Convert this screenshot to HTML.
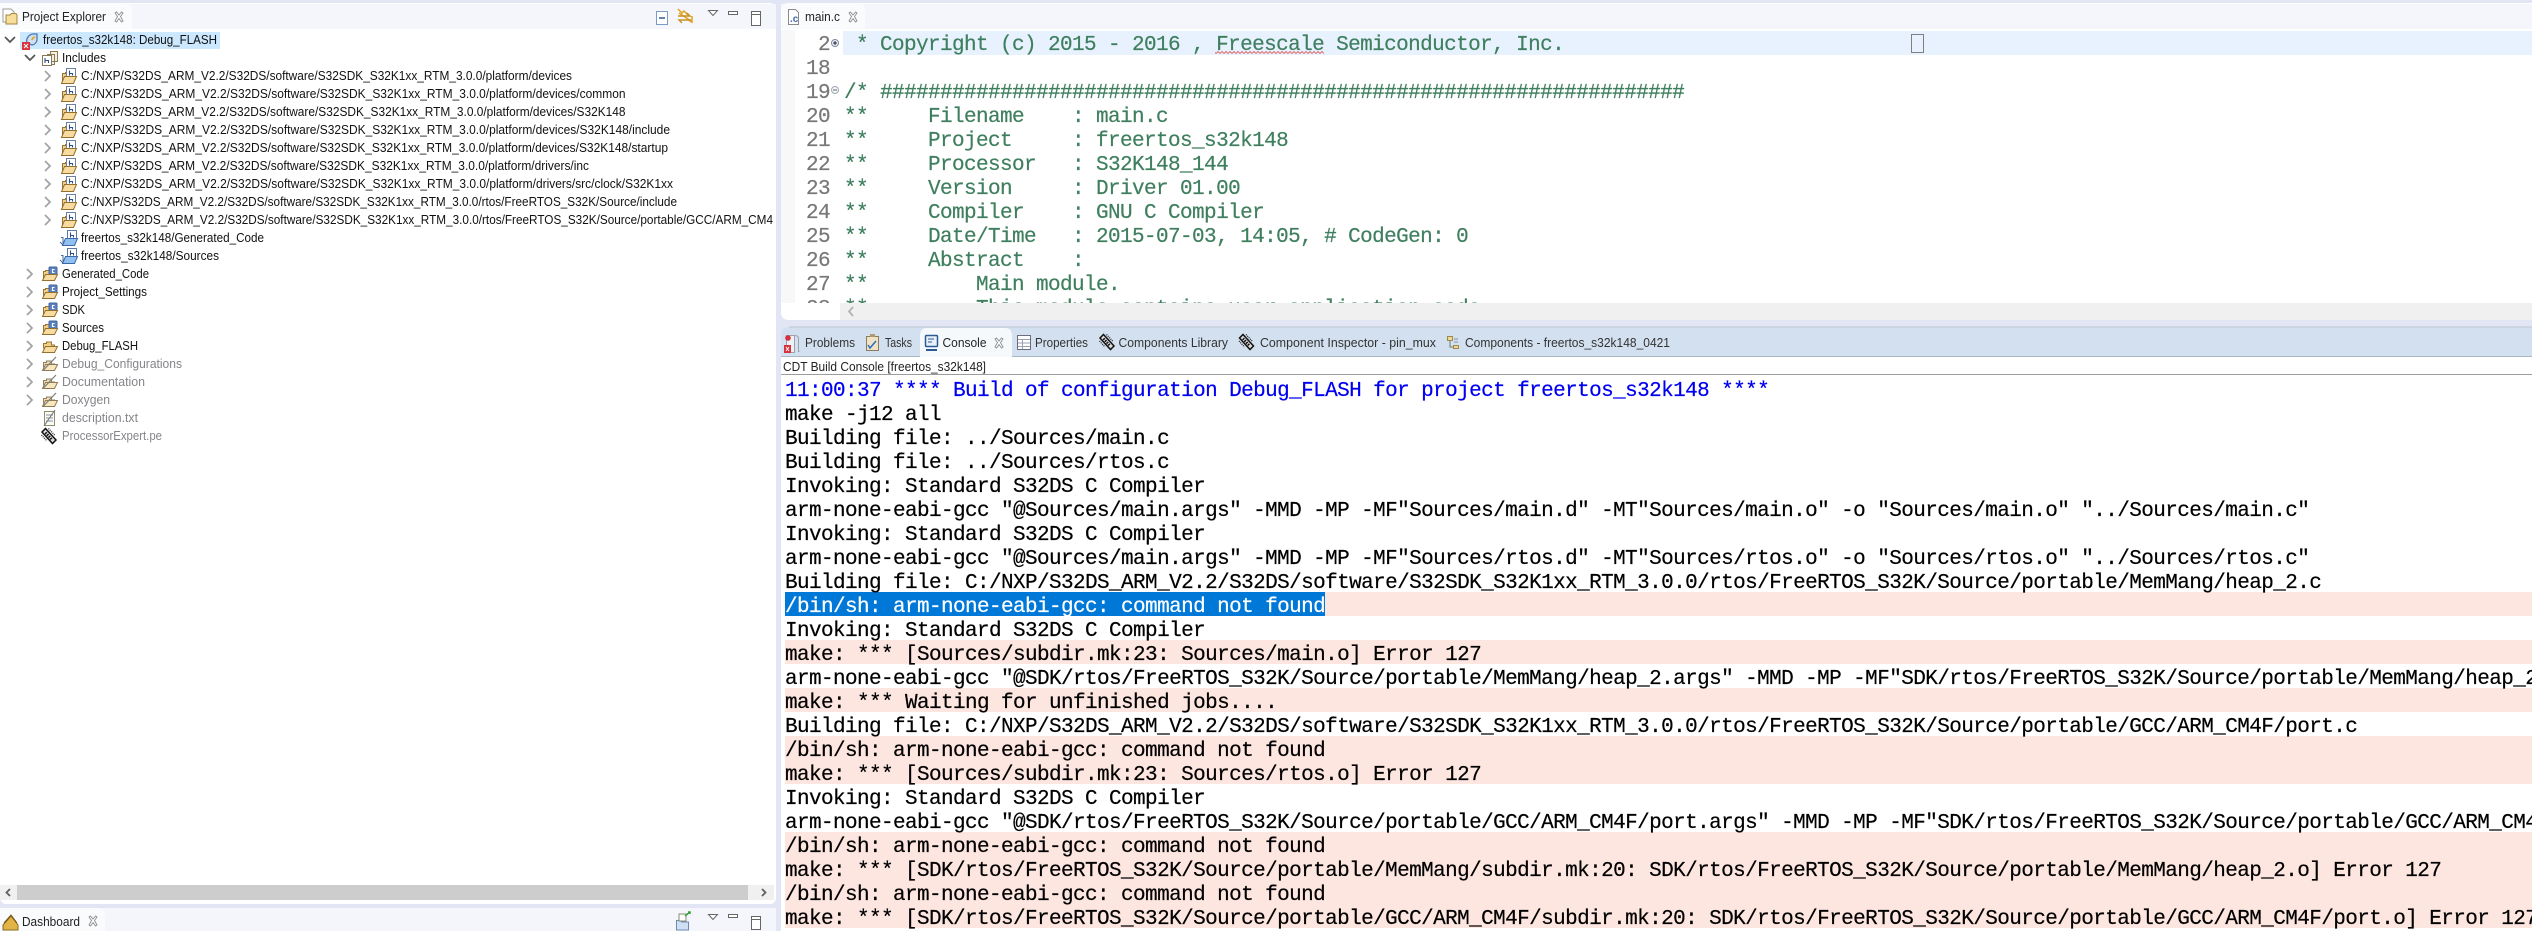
<!DOCTYPE html>
<html><head><meta charset="utf-8"><title>S32DS</title>
<style>
html,body{margin:0;padding:0;background:#e1e5f4;width:2532px;height:931px;overflow:hidden}
svg{display:block}
text{white-space:pre}
.s{font:12.5px "Liberation Sans",sans-serif;fill:#111}
.g{fill:#85858a}
.m{font:21px "Liberation Mono",monospace;letter-spacing:-.6px;fill:#000;stroke:#000;stroke-width:.2}
.c{fill:#3f7f5f;stroke:#3f7f5f}
.n{fill:#787878;stroke:#787878}
.b{fill:#0000f0;stroke:#0000f0}
.w{fill:#fff;stroke:#fff}
</style></head><body>
<svg width="2532" height="931" viewBox="0 0 2532 931" xmlns="http://www.w3.org/2000/svg">
<defs>
<path id="cr" d="M-3-5l5 5-5 5" fill="none" stroke="#a2a2a2" stroke-width="1.7"/>
<path id="cd" d="M-5-3l5 5 5-5" fill="none" stroke="#555" stroke-width="1.7"/>
<g id="x"><path d="M-4-4l1.5-1L0-2l2.5-3L4-4 1.5-.5 4 4 2.5 5 0 1.500-2.500 5-4 4-1.500-.5z" fill="#fff" stroke="#8c8c8c" stroke-width=".9"/></g>
<g id="inc">
<path d="M1.500 5.500h3v-1h2v9h-5z" fill="#f2cf85" stroke="#97753a"/>
<rect x="5.500" y=".5" width="9" height="10" fill="#fff" stroke="#6d7f9b"/>
<path d="M8.500 2.500v5M8.500 5.500h3v2" stroke="#2f4f86" stroke-width="1.100" fill="none"/>
<path d="M.5 15.500l3-7h12l-3 7z" fill="#f8dc9f" stroke="#93702f"/>
</g>
<g id="incb">
<rect x="5.500" y=".5" width="9" height="10" fill="#fff" stroke="#5878a8"/>
<path d="M8.500 2.500v5M8.500 5.500h3v2" stroke="#2f4f86" stroke-width="1.100" fill="none"/>
<path d="M.5 15.500l3-7h12l-3 7z" fill="#8fc0f0" stroke="#3a68a8"/>
<path d="M-1 7.500h2v6M-2 12l3 3" fill="none" stroke="#4a6a98"/>
</g>
<g id="fc">
<path d="M1.500 5.500h2v-1h4v9h-6z" fill="#f2cf85" stroke="#97753a"/>
<rect x="7" y="1" width="8" height="8" rx="1" fill="#5a80c0" stroke="#46659e"/>
<path d="M12.500 3.500h-2v3h2" fill="none" stroke="#fff" stroke-width="1.100"/>
<path d="M.5 14.500l3-6h12l-3 6z" fill="#f8dc9f" stroke="#93702f"/>
</g>
<g id="fo">
<path d="M1.500 5.500h3v-1.500h5v3h3v3h-11z" fill="#f2cf85" stroke="#97753a"/>
<path d="M.5 14.500l3-6h12l-3 6z" fill="#f8dc9f" stroke="#93702f"/>
</g>
<g id="fe">
<path d="M1.500 6.500h3v-1.500h5v3h3v3h-11z" fill="#f2dcae" stroke="#8e8268"/>
<path d="M.5 14.500l3-6h12l-3 6z" fill="#f8e6bd" stroke="#8e7a55"/>
<path d="M1 14.500L14 1" stroke="#7c7c7c" stroke-width="1.200"/>
</g>
<g id="chip">
<path d="M4.500 .5l10.500 11.500-3.500 3.500L1 4z" fill="#dcdcdc" stroke="#111" stroke-width="1.500"/>
<path d="M4.500 4.500l6.500 7.200" stroke="#111" stroke-width="2.400" stroke-dasharray="1.500 1"/>
<path d="M.5 7l5.500 6M7.500 .5l6.500 7" stroke="#222" stroke-width="1.300" stroke-dasharray="1 1"/>
</g>
<pattern id="sq" width="4" height="3" patternUnits="userSpaceOnUse"><path d="M0 2.500l2-2 2 2" fill="none" stroke="#e06060" stroke-width=".9"/></pattern>
<clipPath id="ed"><rect x="781" y="31" width="1751" height="272"/></clipPath>
<clipPath id="lf"><rect x="0" y="30" width="775" height="300"/></clipPath>
</defs>

<rect width="2532" height="931" fill="#e1e5f4"/>

<!-- LEFT PANEL -->
<rect x="0" y="3" width="776" height="901" rx="6" fill="#fff"/>
<path d="M0 4h776v25H0z" fill="#f4f6fb"/>
<path d="M0 3h124q8 0 8 8v18H0z" fill="#fafbfd"/>
<path d="M3 9h8l3 3v10H3z" fill="#fff" stroke="#9c9c9c"/>
<path d="M6 15h4l1.500-1.500H15q2 0 2 2V24H6z" fill="#f7dc9a" stroke="#a5843d"/>
<text class="s" x="22" y="21" textLength="84" lengthAdjust="spacingAndGlyphs" style="fill:#222">Project Explorer</text>
<use href="#x" x="119" y="17"/>
<rect x="656.500" y="11.500" width="11" height="13" fill="#fff" stroke="#7a9cc4"/><path d="M659 18h6" stroke="#2c5c94" stroke-width="1.500"/>
<path d="M678 9l4 4 2-2 5 5M692 16v6l-5-3M679 13l9 6 3 3" fill="none" stroke="#e0a020" stroke-width="1.500"/>
<path d="M678 16h12l-3-3M691 20h-12l3 3" fill="none" stroke="#c8921e" stroke-width="1.400"/>
<path d="M708.500 10.500h9l-4.500 5z" fill="#fff" stroke="#666"/>
<rect x="728.500" y="11.500" width="9" height="3" fill="#fff" stroke="#666"/>
<rect x="751.500" y="11.500" width="9" height="14" fill="#fff" stroke="#666"/><path d="M751 14.500h10" stroke="#666"/>

<rect x="20" y="32" width="200" height="17" fill="#cce8ff"/>
<g clip-path="url(#lf)">
<use href="#cd" x="10" y="40"/>
<path d="M27 43a7 7 0 0 1 7-9l3 0v6a6 6 0 0 1-5 5z" fill="#cfe0f4" stroke="#4f78b0" stroke-width="1.300"/><path d="M32 40a4 4 0 0 1 3-3" stroke="#e0a92e" stroke-width="1.800" fill="none"/>
<rect x="22" y="42" width="8" height="8" fill="#d8343c"/><path d="M24 44l4 4m0-4l-4 4" stroke="#fff"/>
<text class="s" x="43" y="44" textLength="174" lengthAdjust="spacingAndGlyphs">freertos_s32k148: Debug_FLASH</text>

<use href="#cd" x="30" y="58"/>
<path d="M47.500 54.500h7v10h-7zM50.500 51.500h7v10h-7z" fill="#f3f1e6" stroke="#8a7a50"/>
<rect x="42.500" y="55.500" width="9" height="10" fill="#fff" stroke="#86795a"/><path d="M45 58v5M45 60.500h3.500v2.500" stroke="#2f4f86" fill="none" stroke-width="1.100"/>
<text class="s" x="62" y="62" textLength="44" lengthAdjust="spacingAndGlyphs">Includes</text>

<use href="#cr" x="48" y="76"/><use href="#inc" x="61" y="68"/>
<text class="s" x="81" y="80" textLength="491" lengthAdjust="spacingAndGlyphs">C:/NXP/S32DS_ARM_V2.2/S32DS/software/S32SDK_S32K1xx_RTM_3.0.0/platform/devices</text>
<use href="#cr" x="48" y="94"/><use href="#inc" x="61" y="86"/>
<text class="s" x="81" y="98" textLength="544.500" lengthAdjust="spacingAndGlyphs">C:/NXP/S32DS_ARM_V2.2/S32DS/software/S32SDK_S32K1xx_RTM_3.0.0/platform/devices/common</text>
<use href="#cr" x="48" y="112"/><use href="#inc" x="61" y="104"/>
<text class="s" x="81" y="116" textLength="544.500" lengthAdjust="spacingAndGlyphs">C:/NXP/S32DS_ARM_V2.2/S32DS/software/S32SDK_S32K1xx_RTM_3.0.0/platform/devices/S32K148</text>
<use href="#cr" x="48" y="130"/><use href="#inc" x="61" y="122"/>
<text class="s" x="81" y="134" textLength="589" lengthAdjust="spacingAndGlyphs">C:/NXP/S32DS_ARM_V2.2/S32DS/software/S32SDK_S32K1xx_RTM_3.0.0/platform/devices/S32K148/include</text>
<use href="#cr" x="48" y="148"/><use href="#inc" x="61" y="140"/>
<text class="s" x="81" y="152" textLength="587" lengthAdjust="spacingAndGlyphs">C:/NXP/S32DS_ARM_V2.2/S32DS/software/S32SDK_S32K1xx_RTM_3.0.0/platform/devices/S32K148/startup</text>
<use href="#cr" x="48" y="166"/><use href="#inc" x="61" y="158"/>
<text class="s" x="81" y="170" textLength="508" lengthAdjust="spacingAndGlyphs">C:/NXP/S32DS_ARM_V2.2/S32DS/software/S32SDK_S32K1xx_RTM_3.0.0/platform/drivers/inc</text>
<use href="#cr" x="48" y="184"/><use href="#inc" x="61" y="176"/>
<text class="s" x="81" y="188" textLength="592" lengthAdjust="spacingAndGlyphs">C:/NXP/S32DS_ARM_V2.2/S32DS/software/S32SDK_S32K1xx_RTM_3.0.0/platform/drivers/src/clock/S32K1xx</text>
<use href="#cr" x="48" y="202"/><use href="#inc" x="61" y="194"/>
<text class="s" x="81" y="206" textLength="596" lengthAdjust="spacingAndGlyphs">C:/NXP/S32DS_ARM_V2.2/S32DS/software/S32SDK_S32K1xx_RTM_3.0.0/rtos/FreeRTOS_S32K/Source/include</text>
<use href="#cr" x="48" y="220"/><use href="#inc" x="61" y="212"/>
<text class="s" x="81" y="224" textLength="692" lengthAdjust="spacingAndGlyphs">C:/NXP/S32DS_ARM_V2.2/S32DS/software/S32SDK_S32K1xx_RTM_3.0.0/rtos/FreeRTOS_S32K/Source/portable/GCC/ARM_CM4</text>
<use href="#incb" x="62" y="230"/>
<text class="s" x="81" y="242" textLength="183" lengthAdjust="spacingAndGlyphs">freertos_s32k148/Generated_Code</text>
<use href="#incb" x="62" y="248"/>
<text class="s" x="81" y="260" textLength="138" lengthAdjust="spacingAndGlyphs">freertos_s32k148/Sources</text>
</g>

<use href="#cr" x="30" y="274"/><use href="#fc" x="42" y="266"/>
<text class="s" x="62" y="278" textLength="87" lengthAdjust="spacingAndGlyphs">Generated_Code</text>
<use href="#cr" x="30" y="292"/><use href="#fc" x="42" y="284"/>
<text class="s" x="62" y="296" textLength="85" lengthAdjust="spacingAndGlyphs">Project_Settings</text>
<use href="#cr" x="30" y="310"/><use href="#fc" x="42" y="302"/>
<text class="s" x="62" y="314" textLength="23" lengthAdjust="spacingAndGlyphs">SDK</text>
<use href="#cr" x="30" y="328"/><use href="#fc" x="42" y="320"/>
<text class="s" x="62" y="332" textLength="42" lengthAdjust="spacingAndGlyphs">Sources</text>
<use href="#cr" x="30" y="346"/><use href="#fo" x="42" y="338"/>
<text class="s" x="62" y="350" textLength="76" lengthAdjust="spacingAndGlyphs">Debug_FLASH</text>
<use href="#cr" x="30" y="364"/><use href="#fe" x="42" y="356"/>
<text class="s g" x="62" y="368" textLength="120" lengthAdjust="spacingAndGlyphs">Debug_Configurations</text>
<use href="#cr" x="30" y="382"/><use href="#fe" x="42" y="374"/>
<text class="s g" x="62" y="386" textLength="83" lengthAdjust="spacingAndGlyphs">Documentation</text>
<use href="#cr" x="30" y="400"/><use href="#fe" x="42" y="392"/>
<text class="s g" x="62" y="404" textLength="48" lengthAdjust="spacingAndGlyphs">Doxygen</text>
<path d="M44.500 411.500h10v14h-10z" fill="#fbfbf2" stroke="#8f8f6e"/><path d="M46 415h7M46 418h7M46 421h7" stroke="#7f90b0"/><path d="M44 426l11-16" stroke="#777" stroke-width="1.100"/>
<text class="s g" x="62" y="422" textLength="76" lengthAdjust="spacingAndGlyphs">description.txt</text>
<use href="#chip" x="41" y="428"/>
<text class="s g" x="62" y="440" textLength="100" lengthAdjust="spacingAndGlyphs">ProcessorExpert.pe</text>

<!-- scrollbar left -->
<rect x="0" y="885" width="774" height="15" fill="#f0f0f0"/>
<rect x="17" y="885" width="731" height="15" fill="#cdcdcd"/>
<path d="M10 889l-3.500 3.500 3.500 3.500" fill="none" stroke="#606060" stroke-width="1.800"/>
<path d="M762 889l3.500 3.500-3.500 3.500" fill="none" stroke="#606060" stroke-width="1.800"/>

<!-- Dashboard -->
<path d="M0 908h776v23H0z" fill="#f4f6fb"/>
<path d="M0 908h97q8 0 8 8v15H0z" fill="#fafbfd"/>
<path d="M3 925l8-9 7 9v5H3z" fill="#e2b447" stroke="#8a6a1d"/><path d="M4 923l7-8 6 8" fill="none" stroke="#6e5413"/>
<text class="s" x="22" y="926" textLength="58" lengthAdjust="spacingAndGlyphs" style="fill:#222">Dashboard</text>
<use href="#x" x="93" y="921"/>
<path d="M676.500 920.500h4l1 1.500h7v8h-12z" fill="#cfe0f4" stroke="#6d8ab2"/><path d="M679 914h7v7h-7z" fill="#fff" stroke="#8a8a70"/><path d="M685 916l5-4m-2 0h2v2" stroke="#3aa03a" stroke-width="1.500" fill="none"/>
<path d="M708.500 914.500h9l-4.500 5z" fill="#fff" stroke="#666"/>
<rect x="728.500" y="914.500" width="9" height="3" fill="#fff" stroke="#666"/>
<rect x="751.500" y="916.500" width="9" height="13" fill="#fff" stroke="#666"/><path d="M751 919.500h10" stroke="#666"/>

<!-- EDITOR -->
<path d="M781 11q0-8 8-8h1743v317H789q-8 0-8-8z" fill="#fff"/>
<path d="M781 4h1751v25H781z" fill="#f4f6fb"/>
<path d="M781 11q0-8 8-8h68q8 0 8 8v18h-84z" fill="#fafbfd"/>
<path d="M788.500 9.500h7l3 3v12h-10z" fill="#fff" stroke="#8a8a8a"/>
<text x="790" y="22" style="font:bold 10px 'Liberation Sans',sans-serif;fill:#4068b0">.c</text>
<text class="s" x="805" y="21" textLength="35" lengthAdjust="spacingAndGlyphs" style="fill:#222">main.c</text>
<use href="#x" x="853" y="17"/>
<rect x="781" y="30" width="14" height="273" fill="#f8f8f8"/>
<rect x="843" y="31" width="1689" height="24" fill="#e8f2fe"/>
<rect x="1911.500" y="34.500" width="12" height="18" fill="none" stroke="#7f7f7f"/>
<rect x="1215" y="51" width="109" height="3" fill="url(#sq)"/>

<g clip-path="url(#ed)">
<text class="m n" x="830" y="50" text-anchor="end">2</text>
<text class="m n" x="830" y="74" text-anchor="end">18</text>
<text class="m n" x="830" y="98" text-anchor="end">19</text>
<text class="m n" x="830" y="122" text-anchor="end">20</text>
<text class="m n" x="830" y="146" text-anchor="end">21</text>
<text class="m n" x="830" y="170" text-anchor="end">22</text>
<text class="m n" x="830" y="194" text-anchor="end">23</text>
<text class="m n" x="830" y="218" text-anchor="end">24</text>
<text class="m n" x="830" y="242" text-anchor="end">25</text>
<text class="m n" x="830" y="266" text-anchor="end">26</text>
<text class="m n" x="830" y="290" text-anchor="end">27</text>
<text class="m n" x="830" y="314" text-anchor="end">28</text>
<text class="m c" x="844" y="50"> * Copyright (c) 2015 - 2016 , Freescale Semiconductor, Inc.</text>
<text class="m c" x="844" y="98">/* ###################################################################</text>
<text class="m c" x="844" y="122">**     Filename    : main.c</text>
<text class="m c" x="844" y="146">**     Project     : freertos_s32k148</text>
<text class="m c" x="844" y="170">**     Processor   : S32K148_144</text>
<text class="m c" x="844" y="194">**     Version     : Driver 01.00</text>
<text class="m c" x="844" y="218">**     Compiler    : GNU C Compiler</text>
<text class="m c" x="844" y="242">**     Date/Time   : 2015-07-03, 14:05, # CodeGen: 0</text>
<text class="m c" x="844" y="266">**     Abstract    :</text>
<text class="m c" x="844" y="290">**         Main module.</text>
<text class="m c" x="844" y="314">**         This module contains user application code.</text>
</g>
<circle cx="835" cy="43" r="3.500" fill="#eef2f8" stroke="#7c8aa0"/><path d="M833 43h4M835 41v4" stroke="#223"/>
<circle cx="835" cy="90" r="3.500" fill="#f4f6f8" stroke="#a0a8b4"/><path d="M833 90h4" stroke="#667"/>
<rect x="840" y="303" width="1692" height="17" fill="#f0f0f0"/>
<path d="M853 307l-4 4.500 4 4.500" fill="none" stroke="#b0b0b0" stroke-width="1.700"/>

<!-- CONSOLE PANEL -->
<path d="M781 335q0-8 8-8h1743v604H781z" fill="#fff"/>
<path d="M781 335q0-8 8-8h1743v30H781z" fill="#d2e0ef"/>
<path d="M789 327h1743" stroke="#bcc6d4"/>
<path d="M781 356.500h1751" stroke="#a9b6c6"/>
<path d="M920 336q0-8 7-8h78q7 0 7 8v21h-92z" fill="#f6f9fc"/>

<path d="M786.500 335.500h8v17h-8z" fill="#eef1f4" stroke="#9aa2ac"/>
<path d="M794.500 335.500q4 0 4 3v13h1" fill="none" stroke="#9aa2ac"/>
<circle cx="788" cy="338" r="2.800" fill="#d8303c"/><rect x="784" y="345" width="7" height="8" fill="#d8303c"/><path d="M786 347l3 4m0-4l-3 4" stroke="#fff"/>
<text class="s" x="805" y="347" textLength="50" lengthAdjust="spacingAndGlyphs" style="fill:#333">Problems</text>
<rect x="866.500" y="336.500" width="12" height="14" fill="#f0e2c4" stroke="#8a7c60"/><rect x="870" y="334" width="5" height="3" fill="#b09a70"/><path d="M868 345l2 3 6-7" fill="none" stroke="#2c6cc0" stroke-width="1.500"/>
<text class="s" x="885" y="347" textLength="27" lengthAdjust="spacingAndGlyphs" style="fill:#333">Tasks</text>
<rect x="925.500" y="335.500" width="12" height="11" rx="1" fill="#e8f0fa" stroke="#2b5a94" stroke-width="1.500"/><path d="M928 339h6M928 342h4" stroke="#2b5a94"/><path d="M926 350h11" stroke="#2b5a94" stroke-width="2"/>
<text class="s" x="942.500" y="347" textLength="44" lengthAdjust="spacingAndGlyphs" style="fill:#222">Console</text>
<use href="#x" x="999" y="343"/>
<rect x="1017.500" y="335.500" width="13" height="14" fill="#fff" stroke="#6c6c78"/><path d="M1018 339.500h12M1018 343h12M1018 346.500h12M1022.500 339v10" stroke="#9aa0b4"/>
<text class="s" x="1035" y="347" textLength="53" lengthAdjust="spacingAndGlyphs" style="fill:#333">Properties</text>
<use href="#chip" x="1099" y="334"/>
<text class="s" x="1118.500" y="347" textLength="109.500" lengthAdjust="spacingAndGlyphs" style="fill:#333">Components Library</text>
<use href="#chip" x="1238.500" y="334"/>
<text class="s" x="1260" y="347" textLength="176" lengthAdjust="spacingAndGlyphs" style="fill:#333">Component Inspector - pin_mux</text>
<path d="M1447.500 336.500h5v4h-5zM1453.500 345.500h5v3h-5z" fill="#f0d890" stroke="#9a8a50"/><path d="M1450 341v6h3" fill="none" stroke="#777"/><path d="M1454 339h4M1454 342h4" stroke="#8090b0"/>
<text class="s" x="1465" y="347" textLength="205" lengthAdjust="spacingAndGlyphs" style="fill:#333">Components - freertos_s32k148_0421</text>

<text class="s" x="783" y="371" textLength="203" lengthAdjust="spacingAndGlyphs" style="fill:#222">CDT Build Console [freertos_s32k148]</text>
<path d="M781 374.500h1751" stroke="#9c9c9c"/>

<!-- error bands -->
<g fill="#fde6e0">
<rect x="785" y="592" width="1747" height="24"/>
<rect x="785" y="640" width="1747" height="24"/>
<rect x="785" y="688" width="1747" height="24"/>
<rect x="785" y="736" width="1747" height="48"/>
<rect x="785" y="832" width="1747" height="96"/>
</g>
<rect x="785" y="592" width="540" height="24" fill="#0078d7"/>

<text class="m b" x="785" y="396">11:00:37 **** Build of configuration Debug_FLASH for project freertos_s32k148 ****</text>
<text class="m" x="785" y="420">make -j12 all</text>
<text class="m" x="785" y="444">Building file: ../Sources/main.c</text>
<text class="m" x="785" y="468">Building file: ../Sources/rtos.c</text>
<text class="m" x="785" y="492">Invoking: Standard S32DS C Compiler</text>
<text class="m" x="785" y="516">arm-none-eabi-gcc "@Sources/main.args" -MMD -MP -MF"Sources/main.d" -MT"Sources/main.o" -o "Sources/main.o" "../Sources/main.c"</text>
<text class="m" x="785" y="540">Invoking: Standard S32DS C Compiler</text>
<text class="m" x="785" y="564">arm-none-eabi-gcc "@Sources/main.args" -MMD -MP -MF"Sources/rtos.d" -MT"Sources/rtos.o" -o "Sources/rtos.o" "../Sources/rtos.c"</text>
<text class="m" x="785" y="588">Building file: C:/NXP/S32DS_ARM_V2.2/S32DS/software/S32SDK_S32K1xx_RTM_3.0.0/rtos/FreeRTOS_S32K/Source/portable/MemMang/heap_2.c</text>
<text class="m w" x="785" y="612">/bin/sh: arm-none-eabi-gcc: command not found</text>
<text class="m" x="785" y="636">Invoking: Standard S32DS C Compiler</text>
<text class="m" x="785" y="660">make: *** [Sources/subdir.mk:23: Sources/main.o] Error 127</text>
<text class="m" x="785" y="684">arm-none-eabi-gcc "@SDK/rtos/FreeRTOS_S32K/Source/portable/MemMang/heap_2.args" -MMD -MP -MF"SDK/rtos/FreeRTOS_S32K/Source/portable/MemMang/heap_2.d"</text>
<text class="m" x="785" y="708">make: *** Waiting for unfinished jobs....</text>
<text class="m" x="785" y="732">Building file: C:/NXP/S32DS_ARM_V2.2/S32DS/software/S32SDK_S32K1xx_RTM_3.0.0/rtos/FreeRTOS_S32K/Source/portable/GCC/ARM_CM4F/port.c</text>
<text class="m" x="785" y="756">/bin/sh: arm-none-eabi-gcc: command not found</text>
<text class="m" x="785" y="780">make: *** [Sources/subdir.mk:23: Sources/rtos.o] Error 127</text>
<text class="m" x="785" y="804">Invoking: Standard S32DS C Compiler</text>
<text class="m" x="785" y="828">arm-none-eabi-gcc "@SDK/rtos/FreeRTOS_S32K/Source/portable/GCC/ARM_CM4F/port.args" -MMD -MP -MF"SDK/rtos/FreeRTOS_S32K/Source/portable/GCC/ARM_CM4F/port.d"</text>
<text class="m" x="785" y="852">/bin/sh: arm-none-eabi-gcc: command not found</text>
<text class="m" x="785" y="876">make: *** [SDK/rtos/FreeRTOS_S32K/Source/portable/MemMang/subdir.mk:20: SDK/rtos/FreeRTOS_S32K/Source/portable/MemMang/heap_2.o] Error 127</text>
<text class="m" x="785" y="900">/bin/sh: arm-none-eabi-gcc: command not found</text>
<text class="m" x="785" y="924">make: *** [SDK/rtos/FreeRTOS_S32K/Source/portable/GCC/ARM_CM4F/subdir.mk:20: SDK/rtos/FreeRTOS_S32K/Source/portable/GCC/ARM_CM4F/port.o] Error 127</text>
</svg>
</body></html>
